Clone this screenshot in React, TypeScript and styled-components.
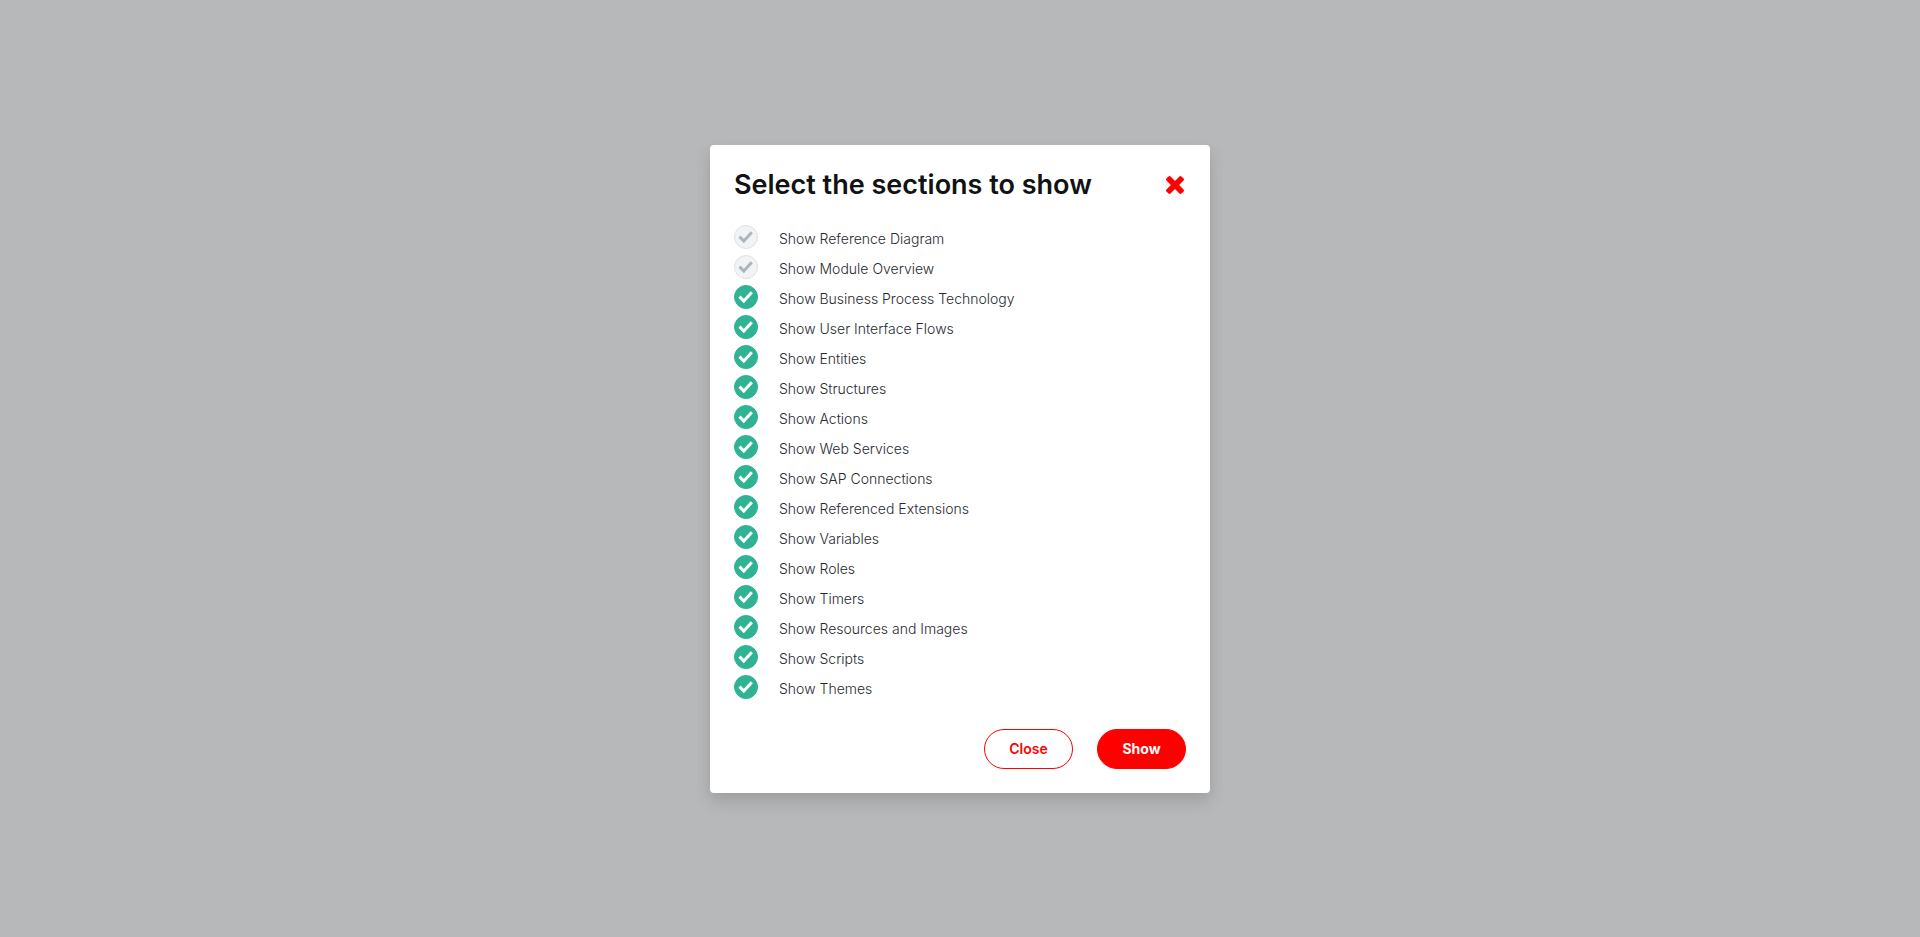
import React from "react";
import styled, { createGlobalStyle } from "styled-components";

const GlobalStyle = createGlobalStyle`
  *, *::before, *::after { box-sizing: border-box; }
  body {
    margin: 0;
    background: #b7b8ba;
    color: #272b30;
    font-family: Inter, "Liberation Sans", sans-serif;
    font-size: 14px;
  }
`;

const Overlay = styled.main`
  min-height: 100vh;
  display: flex;
  align-items: center;
  justify-content: center;
`;

const Dialog = styled.section`
  width: 100%;
  max-width: 500px;
  padding: 24px;
  display: flex;
  flex-direction: column;
  gap: 24px;
  background: #fff;
  border-radius: 4px;
  box-shadow: 0 8px 16px rgba(0, 0, 0, 0.14);
`;

const Header = styled.header`
  display: flex;
  align-items: center;
  justify-content: space-between;
`;

const Title = styled.h1`
  margin: 0;
  font-size: 27px;
  line-height: 32px;
  font-weight: 600;
  color: #101213;
`;

const IconButton = styled.button`
  display: flex;
  padding: 2px;
  border: 0;
  background: none;
  color: #f00;
  cursor: pointer;
`;

const Options = styled.ul`
  margin: 0;
  padding: 0;
  list-style: none;
`;

const Option = styled.label`
  display: flex;
  gap: 21px;
  height: 30px;
  line-height: 28px;
  font-weight: 300;
`;

const CheckBox = styled.span`
  display: grid;
  width: 24px;
  height: 24px;

  > * {
    grid-area: 1 / 1;
  }
`;

const CheckInput = styled.input`
  appearance: none;
  width: 24px;
  height: 24px;
  margin: 0;
  border-radius: 50%;
  border: 1px solid #dee2e6;
  background: #f1f3f5;

  & + svg {
    color: #adb5bd;
    pointer-events: none;
  }
  &:checked:not(:disabled) {
    border-color: #2fb393;
    background: #2fb393;
  }
  &:checked:not(:disabled) + svg {
    color: #fff;
  }
  &:not(:checked):not(:disabled) + svg {
    visibility: hidden;
  }
`;

const Footer = styled.footer`
  display: flex;
  justify-content: flex-end;
  gap: 24px;
`;

const Button = styled.button<{ $primary?: boolean }>`
  height: 40px;
  min-width: 89px;
  padding: 0 24px;
  border: 1px solid #f00;
  border-radius: 20px;
  background: ${(p) => (p.$primary ? "#f00" : "#fff")};
  color: ${(p) => (p.$primary ? "#fff" : "#f00")};
  font: inherit;
  font-weight: ${(p) => (p.$primary ? 700 : 600)};
  cursor: pointer;
`;

const sections = [
  { name: "Reference Diagram", locked: true },
  { name: "Module Overview", locked: true },
  { name: "Business Process Technology" },
  { name: "User Interface Flows" },
  { name: "Entities" },
  { name: "Structures" },
  { name: "Actions" },
  { name: "Web Services" },
  { name: "SAP Connections" },
  { name: "Referenced Extensions" },
  { name: "Variables" },
  { name: "Roles" },
  { name: "Timers" },
  { name: "Resources and Images" },
  { name: "Scripts" },
  { name: "Themes" },
];

export default function App() {
  return (
    <>
      <GlobalStyle />
      <Overlay>
        <Dialog role="dialog" aria-labelledby="dialog-title">
          <Header>
            <Title id="dialog-title">Select the sections to show</Title>
            <IconButton type="button" aria-label="Close dialog">
              <svg width="18" height="18" viewBox="302 366 1188 1188" aria-hidden="true">
                <path
                  d="M1490 1322q0 40-28 68l-136 136q-28 28-68 28t-68-28l-294-294-294 294q-28 28-68 28t-68-28l-136-136q-28-28-28-68t28-68l294-294-294-294q-28-28-28-68t28-68l136-136q28-28 68-28t68 28l294 294 294-294q28-28 68-28t68 28l136 136q28 28 28 68t-28 68l-294 294 294 294q28 28 28 68z"
                  fill="currentColor"
                />
              </svg>
            </IconButton>
          </Header>
          <Options>
            {sections.map(({ name, locked }) => (
              <li key={name}>
                <Option>
                  <CheckBox>
                    <CheckInput type="checkbox" defaultChecked disabled={locked} />
                    <svg width="24" height="24" viewBox="0 0 24 24" aria-hidden="true">
                      <path
                        d="M5.5 11.6L9.8 16L17.8 7.3"
                        fill="none"
                        stroke="currentColor"
                        strokeWidth="3"
                      />
                    </svg>
                  </CheckBox>
                  <span>Show {name}</span>
                </Option>
              </li>
            ))}
          </Options>
          <Footer>
            <Button type="button">Close</Button>
            <Button type="button" $primary>
              Show
            </Button>
          </Footer>
        </Dialog>
      </Overlay>
    </>
  );
}
